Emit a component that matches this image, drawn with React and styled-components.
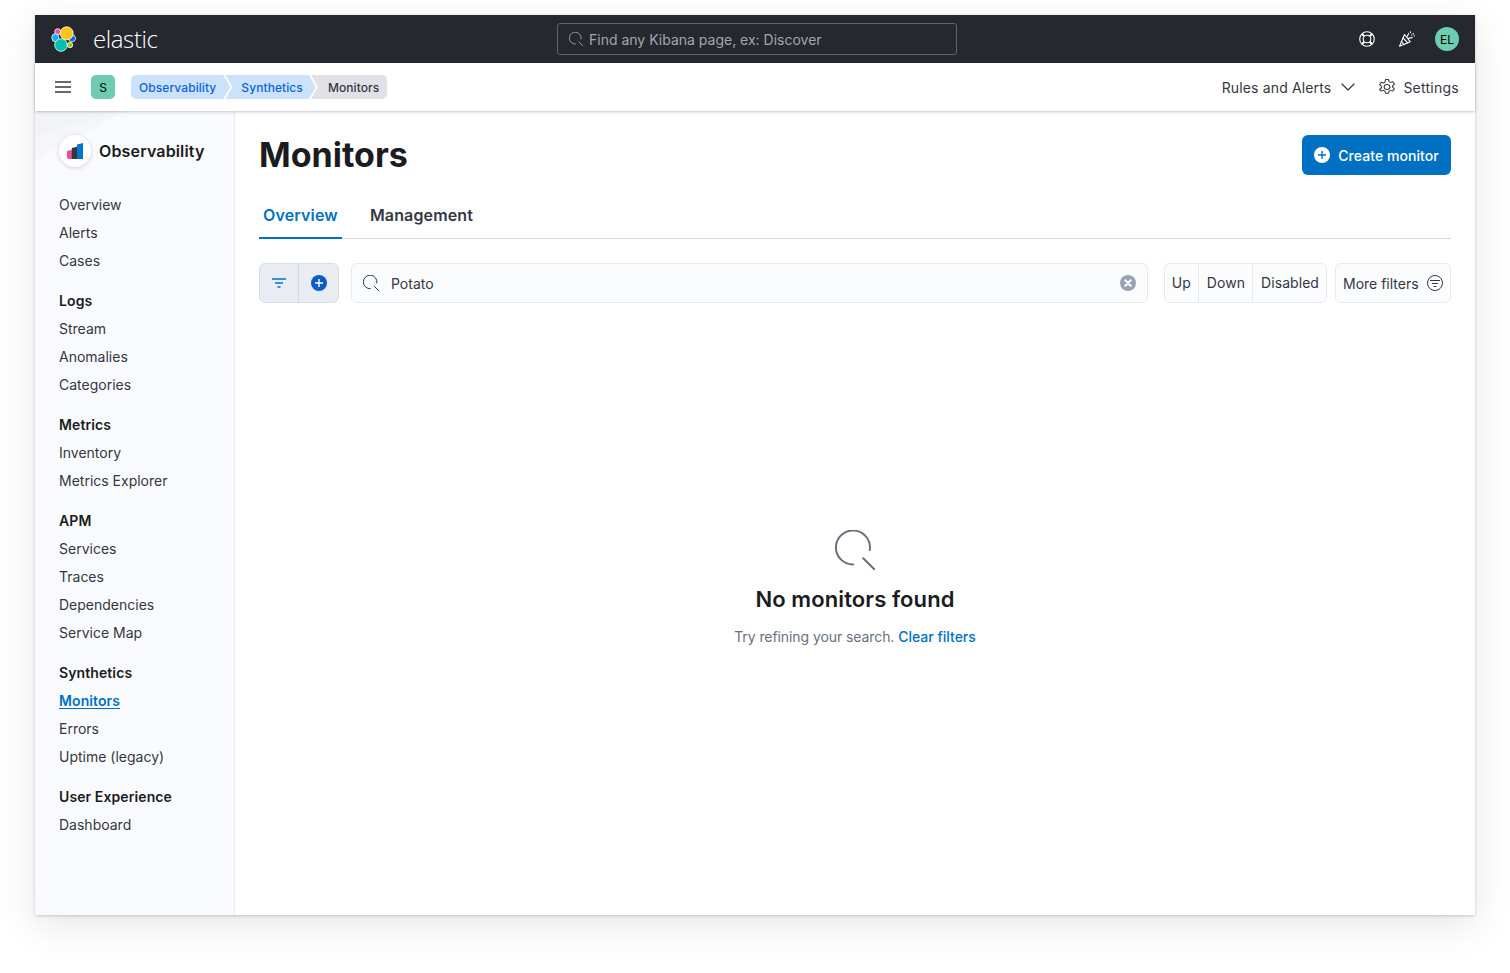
import React from "react";
import styled, { createGlobalStyle } from "styled-components";

const Global = createGlobalStyle`
  html, body { margin: 0; padding: 0; background: #fff; }
  body { font-family: Inter, "Liberation Sans", sans-serif; color: #343741; }
  * { box-sizing: border-box; }
`;

const Stage = styled.div`
  width: 1510px;
  height: 973px;
  padding: 15px 35px 58px;
  overflow: hidden;
`;
const Win = styled.div`
  width: 1440px;
  height: 900px;
  display: flex;
  flex-direction: column;
  background: #fff;
  box-shadow: 0 1px 3px rgba(0,0,0,.18), 0 10px 36px rgba(0,0,0,.10);
`;
const TopBar = styled.header`
  height: 48px;
  flex: none;
  background: #25282f;
  display: grid;
  grid-template-columns: 506px 400px 1fr;
  align-items: center;
  padding: 0 16px;
`;
const BrandBox = styled.div`
  display: flex;
  align-items: center;
  gap: 16px;
`;
const BrandName = styled.span`
  color: #fff;
  font-family: "Open Sans", Lato, sans-serif;
  font-size: 24px;
  font-weight: 300;
  letter-spacing: -0.4px;
  line-height: 48px;
`;
const GlobalSearch = styled.div`
  height: 32px;
  border: 1px solid #5e636e;
  border-radius: 3px;
  display: flex;
  align-items: center;
  gap: 6px;
  padding: 0 11px;
  color: #a2a6ae;
  font-size: 14px;
  svg { flex: none; }
`;
const TopRight = styled.div`
  display: flex;
  justify-content: flex-end;
  align-items: center;
`;
const HeaderIcon = styled.div`
  width: 40px;
  height: 40px;
  display: flex;
  align-items: center;
  justify-content: center;
`;
const Avatar = styled.div`
  width: 24px;
  height: 24px;
  margin-left: 8px;
  border-radius: 50%;
  background: #6dccb1;
  color: #000;
  font-size: 12px;
  display: flex;
  align-items: center;
  justify-content: center;
`;
const SubBar = styled.div`
  height: 48px;
  flex: none;
  background: #fff;
  display: flex;
  align-items: center;
  padding: 0 16px 0 20px;
  box-shadow: 0 1px 2px rgba(0,0,0,.16), 0 2px 4px rgba(0,0,0,.05);
  position: relative;
  z-index: 2;
`;
const SpaceBadge = styled.div`
  width: 24px;
  height: 24px;
  margin-left: 20px;
  border-radius: 5px;
  background: #6dccb1;
  color: #000;
  font-size: 12px;
  display: flex;
  align-items: center;
  justify-content: center;
`;
const Crumbs = styled.nav`
  display: flex;
  margin-left: 16px;
`;
const Crumb = styled.span`
  height: 24px;
  display: flex;
  align-items: center;
  font-size: 12px;
  font-weight: 500;
  letter-spacing: 0.08px;
  padding: ${p => p.$first ? "0 14px 0 8px" : p.$last ? "0 8px 0 17px" : "0 13px 0 16px"};
  margin-left: ${p => p.$first ? 0 : "-5px"};
  background: ${p => p.$last ? "#e0e2e8" : "#cce2fa"};
  color: ${p => p.$last ? "#343741" : "#0b64dd"};
  border-radius: ${p => p.$first ? "5px 0 0 5px" : p.$last ? "0 5px 5px 0" : 0};
  clip-path: ${p => p.$first
    ? "polygon(0 0, calc(100% - 7px) 0, 100% 50%, calc(100% - 7px) 100%, 0 100%)"
    : p.$last
    ? "polygon(0 0, 100% 0, 100% 100%, 0 100%, 7px 50%)"
    : "polygon(0 0, calc(100% - 7px) 0, 100% 50%, calc(100% - 7px) 100%, 0 100%, 7px 50%)"};
`;
const SubRight = styled.div`
  margin-left: auto;
  display: flex;
  align-items: center;
  font-size: 14px;
  letter-spacing: 0.15px;
  color: #343741;
`;
const SubLink = styled.span`
  display: flex;
  align-items: center;
  gap: ${p => p.$gap}px;
  margin-left: ${p => p.$ml || 0}px;
  letter-spacing: ${p => p.$ls || "inherit"};
`;
const Body = styled.div`
  flex: 1;
  display: flex;
  min-height: 0;
`;
const Sidebar = styled.aside`
  width: 200px;
  flex: none;
  background:
    linear-gradient(163deg, #f1f3f6 24px, transparent 24.6px),
    linear-gradient(151deg, #f5f6f9 43px, transparent 43.6px),
    #f9fafd;
  border-right: 1px solid #e9ebf1;
  padding: 24px 24px 0;
`;
const SideHead = styled.div`
  display: flex;
  align-items: center;
  gap: 8px;
  height: 32px;
  margin-bottom: 24px;
  font-size: 16px;
  font-weight: 600;
  letter-spacing: 0.15px;
  color: #1a1c21;
`;
const LogoCircle = styled.div`
  width: 32px;
  height: 32px;
  border-radius: 50%;
  background: #fff;
  box-shadow: 0 1px 4px rgba(0,0,0,.16);
  display: flex;
  align-items: center;
  justify-content: center;
`;
const Group = styled.div`
  margin-bottom: 12px;
`;
const GroupTitle = styled.div`
  height: 28px;
  line-height: 28px;
  font-size: 14px;
  font-weight: 600;
  letter-spacing: 0.1px;
  color: #1a1c21;
`;
const NavItem = styled.a`
  display: block;
  height: 28px;
  line-height: 28px;
  font-size: 14px;
  white-space: nowrap;
  color: ${p => p.$active ? "#0071c2" : "#343741"};
  font-weight: ${p => p.$active ? 600 : 400};
  letter-spacing: ${p => p.$active ? "0.1px" : 0};
  text-decoration: ${p => p.$active ? "underline" : "none"};
  text-underline-offset: 2px;
`;
const Main = styled.main`
  flex: 1;
  padding: 24px;
  display: flex;
  flex-direction: column;
  min-width: 0;
`;
const TitleRow = styled.div`
  display: flex;
  justify-content: space-between;
  align-items: flex-start;
  height: 40px;
`;
const Title = styled.h1`
  margin: 0;
  font-size: 34px;
  line-height: 40px;
  font-weight: 700;
  color: #1a1c21;
`;
const CreateBtn = styled.button`
  width: 149px;
  height: 40px;
  border: 0;
  border-radius: 6px;
  background: #0071c2;
  color: #fff;
  font: 500 14px Inter, sans-serif;
  letter-spacing: 0.07px;
  display: flex;
  align-items: center;
  justify-content: center;
  gap: 8px;
`;
const Tabs = styled.div`
  display: flex;
  gap: 20px;
  margin-top: 16px;
  height: 48px;
  border-bottom: 1px solid #d3dae6;
`;
const Tab = styled.div`
  padding: 0 ${p => p.$active ? 4 : 8}px;
  margin-bottom: -1px;
  height: 48px;
  line-height: 48px;
  font-size: 16px;
  font-weight: 600;
  letter-spacing: 0.15px;
  color: ${p => p.$active ? "#0071c2" : "#343741"};
  border-bottom: 2px solid ${p => p.$active ? "#0071c2" : "transparent"};
`;
const FilterRow = styled.div`
  display: flex;
  margin-top: 24px;
  height: 40px;
`;
const FilterPair = styled.div`
  width: 80px;
  height: 40px;
  flex: none;
  border: 1px solid #d8deeb;
  border-radius: 6px;
  background: #e9edf3;
  display: grid;
  grid-template-columns: 38px 1fr;
  div { display: flex; align-items: center; justify-content: center; }
  div + div { border-left: 1px solid #d3dae6; }
`;
const Search = styled.div`
  flex: 1;
  margin-left: 12px;
  border: 1px solid #e6e9f2;
  border-radius: 6px;
  background: #fbfcfd;
  display: flex;
  align-items: center;
  padding: 0 11px;
  font-size: 14px;
  color: #343741;
  gap: 12px;
  span { flex: 1; }
`;
const Segmented = styled.div`
  margin-left: 16px;
  border: 1px solid #e6e9f2;
  border-radius: 6px;
  background: #fbfcfd;
  display: flex;
  flex: none;
  font-size: 14px;
  letter-spacing: 0.06px;
  color: #343741;
`;
const Seg = styled.div`
  padding: 0 7px 0 8px;
  line-height: 38px;
  &:first-child { padding-left: 7px; }
  & + & { border-left: 1px solid #e6e9f2; }
`;
const MoreBtn = styled.div`
  margin-left: 8px;
  width: 116px;
  border: 1px solid #e6e9f2;
  border-radius: 6px;
  background: #fbfcfd;
  display: flex;
  align-items: center;
  justify-content: space-between;
  padding: 0 7px;
  font-size: 14px;
  color: #343741;
`;
const Empty = styled.div`
  margin-top: 227px;
  display: flex;
  flex-direction: column;
  align-items: center;
`;
const EmptyTitle = styled.h2`
  margin: 13px 0 0;
  font-size: 22px;
  line-height: 32px;
  font-weight: 600;
  letter-spacing: 0.1px;
  color: #1a1c21;
`;
const EmptyText = styled.p`
  margin: 12px 0 0;
  font-size: 14px;
  line-height: 20px;
  letter-spacing: -0.08px;
  color: #69707d;
  a { color: #0071c2; font-weight: 500; letter-spacing: 0; }
`;

const ElasticLogo = () => (
  <svg width="26" height="26" viewBox="0 0 26 26" stroke="#fff" strokeWidth="0.8">
    <circle cx="6.700" cy="5.700" r="3" fill="#f04e98" />
    <ellipse cx="4.300" cy="11.700" rx="3.500" ry="4" fill="#1ba9f5" />
    <circle cx="21" cy="12.300" r="3.500" fill="#0b64dd" />
    <circle cx="19" cy="19" r="2.700" fill="#93c90e" />
    <circle cx="15.700" cy="7.300" r="6.500" fill="#fec514" />
    <circle cx="10" cy="19" r="6.300" fill="#00bfb3" />
  </svg>
);
const Magnifier = ({ size = 16, color = "#343741", sw = 1 }) => (
  <svg width={size} height={size} viewBox="0 0 16 16" fill="none" stroke={color} strokeWidth={sw} strokeLinecap="round">
    <path d="M7.300 13.800A6.800 6.800 0 1 1 13.900 8" />
    <path d="M11.300 11.300l4.400 4.400" />
  </svg>
);
const LifeRing = () => (
  <svg width="16" height="16" viewBox="0 0 16 16" fill="none" stroke="#fff" strokeWidth="1.100">
    <circle cx="8" cy="8" r="7.300" />
    <circle cx="8" cy="8" r="3.800" />
    <path d="M3 3l2.300 2.300M13 3l-2.300 2.300M3 13l2.300-2.300M13 13l-2.300-2.300" strokeWidth="2" />
  </svg>
);
const Party = () => (
  <svg width="16" height="16" viewBox="0 0 16 16" fill="none" stroke="#fff" strokeWidth="1.100" strokeLinejoin="round" strokeLinecap="round">
    <path d="M5.500 3.500L.5 15.200l10.800-4.400z" />
    <path d="M4 7l4.800 4.900M2.400 10.600l2.800 3" />
    <path d="M8 5.800c.5-1.400 1.200-2 1.600-3.400M9.300 7.600c1.400-.8 2.500-1 3.900-1M11.500.8v.6M14 2.600l.5.5M15.200 5h.5M12.400 4h.4" />
  </svg>
);
const Burger = () => (
  <svg width="16" height="12" viewBox="0 0 16 12" stroke="#343741" strokeWidth="1.600">
    <path d="M0 1h16M0 6h16M0 11h16" />
  </svg>
);
const Chevron = () => (
  <svg width="14" height="8" viewBox="0 0 14 8" fill="none" stroke="#343741" strokeWidth="1.200" strokeLinecap="round" strokeLinejoin="round">
    <path d="M1 1l6 6 6-6" />
  </svg>
);
const Gear = () => (
  <svg width="16" height="16" viewBox="1 0.200 14 15.600" preserveAspectRatio="none" fill="none" stroke="#343741" strokeWidth="0.950" strokeLinejoin="round">
    <path d="M6.700.700h2.600l.5 2.100 1.300.7 2-.7 1.400 2.300-1.600 1.500v1.600l1.600 1.500-1.400 2.300-2-.7-1.300.7-.5 2.100H6.700l-.5-2.100-1.300-.7-2 .7L1.500 10.300l1.600-1.500V7.200L1.500 5.700l1.400-2.300 2 .7 1.300-.7z" />
    <circle cx="8" cy="8" r="2.500" />
  </svg>
);
const ObsLogo = () => (
  <svg width="16" height="16" viewBox="0 0 16 16">
    <path d="M0 8l5-1.300V16H2a2 2 0 0 1-2-2z" fill="#f04e98" />
    <path d="M4.800 5l5.200-1.300V16H4.800z" fill="#343741" />
    <path d="M10 1.500L16 0V16h-6z" fill="#0077cc" />
  </svg>
);
const PlusCircle = ({ size = 16, bg = "#fff", fg = "#0071c2" }) => (
  <svg width={size} height={size} viewBox="0 0 16 16">
    <circle cx="8" cy="8" r="8" fill={bg} />
    <path d="M8 4v8M4 8h8" stroke={fg} strokeWidth="1.400" />
  </svg>
);
const FilterLines = () => (
  <svg width="14" height="10" viewBox="0 0 14 10" stroke="#0071c2" strokeWidth="1.400">
    <path d="M0 1h14M3 5h8M5.500 9h3" />
  </svg>
);
const ClearIcon = () => (
  <svg width="16" height="16" viewBox="0 0 16 16">
    <circle cx="8" cy="8" r="8" fill="#98a2b3" />
    <path d="M5.300 5.300l5.400 5.400M10.700 5.300l-5.400 5.400" stroke="#fff" strokeWidth="2.200" strokeLinecap="round" />
  </svg>
);
const CircleFilter = () => (
  <svg width="16" height="16" viewBox="0 0 16 16" fill="none" stroke="#343741" strokeWidth="1">
    <circle cx="8" cy="8" r="7.500" />
    <path d="M3 5.500h10M5 8.500h6M6.500 11.500h3" />
  </svg>
);

const groups = [
  { items: ["Overview", "Alerts", "Cases"] },
  { title: "Logs", items: ["Stream", "Anomalies", "Categories"] },
  { title: "Metrics", items: ["Inventory", "Metrics Explorer"] },
  { title: "APM", items: ["Services", "Traces", "Dependencies", "Service Map"] },
  { title: "Synthetics", items: ["Monitors", "Errors", "Uptime (legacy)"] },
  { title: "User Experience", items: ["Dashboard"] },
];

export default function App() {
  return (
    <Stage>
      <Global />
      <Win>
        <TopBar>
          <BrandBox>
            <ElasticLogo />
            <BrandName>elastic</BrandName>
          </BrandBox>
          <GlobalSearch>
            <Magnifier size={14} color="#a2a6ae" />
            Find any Kibana page, ex: Discover
          </GlobalSearch>
          <TopRight>
            <HeaderIcon><LifeRing /></HeaderIcon>
            <HeaderIcon><Party /></HeaderIcon>
            <Avatar>EL</Avatar>
          </TopRight>
        </TopBar>
        <SubBar>
          <Burger />
          <SpaceBadge>S</SpaceBadge>
          <Crumbs>
            <Crumb $first>Observability</Crumb>
            <Crumb>Synthetics</Crumb>
            <Crumb $last>Monitors</Crumb>
          </Crumbs>
          <SubRight>
            <SubLink $gap={10}>Rules and Alerts <Chevron /></SubLink>
            <SubLink $gap={8} $ml={24} $ls="0.25px"><Gear /> Settings</SubLink>
          </SubRight>
        </SubBar>
        <Body>
          <Sidebar>
            <SideHead>
              <LogoCircle><ObsLogo /></LogoCircle>
              Observability
            </SideHead>
            {groups.map((g, i) => (
              <Group key={i}>
                {g.title && <GroupTitle>{g.title}</GroupTitle>}
                {g.items.map(it => (
                  <NavItem key={it} $active={it === "Monitors"}>{it}</NavItem>
                ))}
              </Group>
            ))}
          </Sidebar>
          <Main>
            <TitleRow>
              <Title>Monitors</Title>
              <CreateBtn><PlusCircle />Create monitor</CreateBtn>
            </TitleRow>
            <Tabs>
              <Tab $active>Overview</Tab>
              <Tab>Management</Tab>
            </Tabs>
            <FilterRow>
              <FilterPair>
                <div><FilterLines /></div>
                <div><PlusCircle bg="#0b5cc5" fg="#fff" /></div>
              </FilterPair>
              <Search>
                <Magnifier size={16} />
                <span>Potato</span>
                <ClearIcon />
              </Search>
              <Segmented>
                <Seg>Up</Seg>
                <Seg>Down</Seg>
                <Seg>Disabled</Seg>
              </Segmented>
              <MoreBtn>More filters <CircleFilter /></MoreBtn>
            </FilterRow>
            <Empty>
              <Magnifier size={40} color="#69707d" sw={0.8} />
              <EmptyTitle>No monitors found</EmptyTitle>
              <EmptyText>Try refining your search. <a>Clear filters</a></EmptyText>
            </Empty>
          </Main>
        </Body>
      </Win>
    </Stage>
  );
}
